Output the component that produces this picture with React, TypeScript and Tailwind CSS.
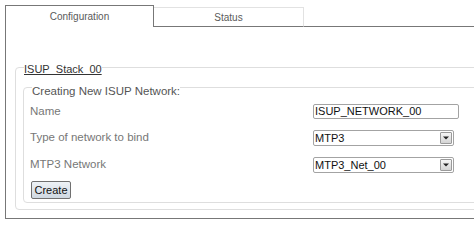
import React from 'react';

function Arrow() {
  return (
    <span className="flex h-[12px] w-[12px] items-center justify-center rounded-[1px] border border-[#9a9a9a] bg-gradient-to-b from-[#f6f6f6] to-[#d4d4d4]">
      <svg width="6" height="4" viewBox="0 0 6 4">
        <path d="M0 0.5h6L3 3.5z" fill="#222" />
      </svg>
    </span>
  );
}

function SelectBox({ value }: { value: string }) {
  return (
    <div className="flex h-[16px] w-[141px] items-center rounded-[2px] border border-[#a3a3a3] bg-white pl-[1px] pr-[1px] text-[11px] text-[#111]">
      <span className="flex-1 leading-none">{value}</span>
      <Arrow />
    </div>
  );
}

export default function App() {
  return (
    <div className="h-[228px] w-[474px] overflow-hidden bg-white font-['Liberation_Sans',Arial,sans-serif]">
      <div className="w-[560px] pl-[5px] pt-[5px]">
        <div className="flex h-[22px] items-end">
          <div className="flex h-[22px] w-[149px] items-center justify-center border border-b-0 border-[#777] text-[10px] text-[#5a5a5a]">
            Configuration
          </div>
          <div className="flex h-[20px] w-[150px] items-center justify-center border-r border-t border-b border-[#e2e2e2] border-b-[#777] text-[10px] text-[#5a5a5a]">
            Status
          </div>
          <div className="flex-1 border-b border-[#777]" />
        </div>

        <div className="h-[192px] border-b border-l border-[#777] pl-[9px] pt-[31px]">
          <fieldset className="w-[540px] rounded-[4px] border border-[#dedede] px-[7px] pb-[6px]">
            <legend className="ml-[1px] pt-[4px] text-[11px] leading-[14px] text-[#333] underline">
              ISUP_Stack_00
            </legend>

            <fieldset className="w-[520px] rounded-[4px] border border-[#dedede] px-[6px] pb-[3px]">
              <legend className="ml-[2px] pt-[8px] text-[11.5px] leading-[14px] text-[#555]">
                Creating New ISUP Network:
              </legend>

              <div className="mt-[6px] flex h-[15px] items-center">
                <span className="w-[283px] text-[11.5px] text-[#777]">Name</span>
                <input
                  className="h-[15px] w-[146px] rounded-[2px] border border-[#a3a3a3] bg-white pl-[1px] text-[11px] text-[#111] outline-none"
                  defaultValue="ISUP_NETWORK_00"
                />
              </div>

              <div className="mt-[11px] flex h-[16px] items-center">
                <span className="w-[283px] text-[11.5px] text-[#777]">Type of network to bind</span>
                <SelectBox value="MTP3" />
              </div>

              <div className="mt-[11px] flex h-[16px] items-center">
                <span className="w-[283px] text-[11.5px] text-[#777]">MTP3 Network</span>
                <SelectBox value="MTP3_Net_00" />
              </div>

              <button
                type="button"
                className="ml-[1px] mt-[8px] flex h-[18px] w-[40px] items-center justify-center rounded-[2px] border border-[#707070] bg-gradient-to-b from-[#eef2f6] to-[#cfd8e1] text-[11px] text-[#111]"
              >
                Create
              </button>
            </fieldset>
          </fieldset>
        </div>
      </div>
    </div>
  );
}
